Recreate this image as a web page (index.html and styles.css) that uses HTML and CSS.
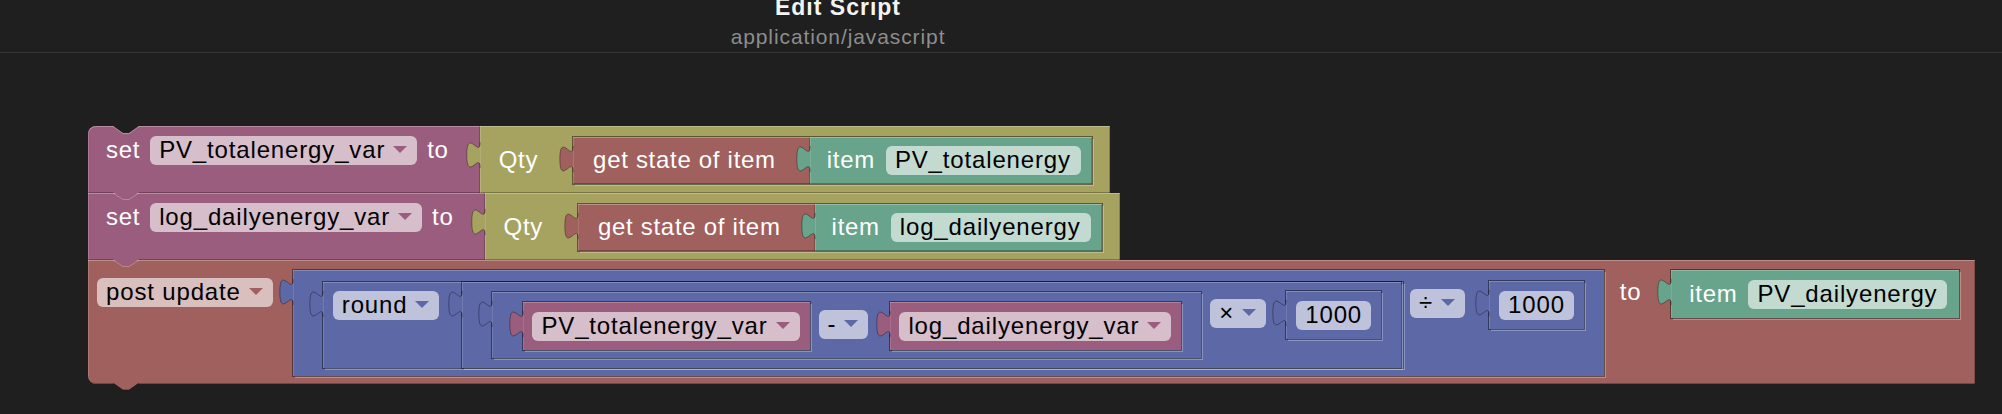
FILE: index.html
```html
<!DOCTYPE html>
<html>

<head>
  <meta charset="utf-8">
  <title>Edit Script</title>
  <link rel="stylesheet" href="styles.css">
</head>

<body>
  <!-- shared puzzle tab for value blocks -->
  <svg class="defs" aria-hidden="true">
    <symbol id="tab" viewBox="-8.5 -0.5 9 16" preserveAspectRatio="none">
      <path d="M0 0c0 10-8-8.5-8 7.5s8-2.5 8 7.5z" fill="currentColor" />
      <path d="M0 0c0 10-8-8.5-8 7.5s8-2.5 8 7.5" fill="none" stroke="#000" stroke-opacity=".35" stroke-width="1"
        vector-effect="non-scaling-stroke" />
    </symbol>
  </svg>

  <header class="topbar">
    <h1>Edit Script</h1>
    <div class="mime">application/javascript</div>
  </header>

  <main class="workspace">
    <div class="stack">

      <div class="row">
        <div class="blk stmt set first">
          <svg class="notch" viewBox="0 0 26 8"><polygon points="0,0 10,7 16,7 26,0" /><polyline points="0,0.5 10,7.5 16,7.5 26,0.5" /></svg>
          <span class="lbl">set</span>
          <span class="fld">PV_totalenergy_var<i class="arr"></i></span>
          <span class="lbl">to</span>
          <svg class="next" viewBox="0 0 26 8"><polygon points="0,0 10,7 16,7 26,0" /><polyline points="0,1 10,7.5 16,7.5 26,1" /></svg>
        </div>
        <div class="blk qty">
          <svg class="tab"><use href="#tab" /></svg>
          <span class="lbl">Qty</span>
          <div class="plug pair">
            <div class="blk get"><svg class="tab"><use href="#tab" /></svg><span class="lbl">get state of item</span></div>
            <div class="blk item"><svg class="tab"><use href="#tab" /></svg><span class="lbl">item</span><span class="fld">PV_totalenergy</span></div>
          </div>
        </div>
      </div>

      <div class="row">
        <div class="blk stmt set">
          <span class="lbl">set</span>
          <span class="fld">log_dailyenergy_var<i class="arr"></i></span>
          <span class="lbl">to</span>
          <svg class="next" viewBox="0 0 26 8"><polygon points="0,0 10,7 16,7 26,0" /><polyline points="0,1 10,7.5 16,7.5 26,1" /></svg>
        </div>
        <div class="blk qty">
          <svg class="tab"><use href="#tab" /></svg>
          <span class="lbl">Qty</span>
          <div class="plug pair">
            <div class="blk get"><svg class="tab"><use href="#tab" /></svg><span class="lbl">get state of item</span></div>
            <div class="blk item"><svg class="tab"><use href="#tab" /></svg><span class="lbl">item</span><span class="fld">log_dailyenergy</span></div>
          </div>
        </div>
      </div>

      <div class="blk stmt post">
        <span class="fld">post update<i class="arr"></i></span>

        <div class="blk math plug div">
          <svg class="tab"><use href="#tab" /></svg>
          <div class="blk math plug round">
            <svg class="tab"><use href="#tab" /></svg>
            <span class="fld">round<i class="arr"></i></span>
            <div class="blk math plug mul">
              <svg class="tab"><use href="#tab" /></svg>
              <div class="blk math plug sub">
                <svg class="tab"><use href="#tab" /></svg>
                <div class="blk var plug"><svg class="tab"><use href="#tab" /></svg><span class="fld">PV_totalenergy_var<i class="arr"></i></span></div>
                <span class="fld">-<i class="arr"></i></span>
                <div class="blk var plug"><svg class="tab"><use href="#tab" /></svg><span class="fld">log_dailyenergy_var<i class="arr"></i></span></div>
              </div>
              <span class="fld">×<i class="arr"></i></span>
              <div class="blk math plug num"><svg class="tab"><use href="#tab" /></svg><span class="fld">1000</span></div>
            </div>
          </div>
          <span class="fld">÷<i class="arr"></i></span>
          <div class="blk math plug num"><svg class="tab"><use href="#tab" /></svg><span class="fld">1000</span></div>
        </div>

        <span class="lbl">to</span>
        <div class="blk item plug"><svg class="tab"><use href="#tab" /></svg><span class="lbl">item</span><span class="fld">PV_dailyenergy</span></div>

        <svg class="next" viewBox="0 0 26 8"><polygon points="0,0 10,7 16,7 26,0" /><polyline points="0,0 10,7 16,7 26,0" /></svg>
      </div>

    </div>
  </main>
</body>

</html>
```

FILE: styles.css
```css
* {
  box-sizing: border-box;
}

body {
  margin: 0;
  height: 414px;
  overflow: hidden;
  background-color: #1f1f1f;
  font-family: "Liberation Sans", Arial, Helvetica, sans-serif;
}

.defs {
  position: absolute;
  width: 0;
  height: 0;
  overflow: hidden;
}

/* header */

.topbar {
  height: 53px;
  padding-right: 326px;
  border-bottom: 1px solid #353535;
  display: flex;
  flex-direction: column;
  align-items: center;
}

.topbar h1 {
  margin: -5px 0 0;
  font-size: 23px;
  line-height: 24px;
  font-weight: bold;
  letter-spacing: 1px;
  color: #f4f4f4;
}

.mime {
  margin-top: 6px;
  font-size: 21px;
  line-height: 24px;
  letter-spacing: 0.9px;
  color: #8d8d8d;
}

/* workspace */

.workspace {
  padding: 73px 0 0 88px;
}

.stack {
  display: flex;
  flex-direction: column;
  align-items: flex-start;
}

.row {
  display: flex;
  align-items: stretch;
}

/* block colours */

.set,
.var {
  --c: #9b5d7e;
}

.qty {
  --c: #a6a360;
}

.get,
.post {
  --c: #a0605d;
}

.item {
  --c: #68a48b;
}

.math {
  --c: #5d69a6;
}

/* blocks */

.blk {
  position: relative;
  display: flex;
  align-items: flex-start;
  background-color: var(--c);
  box-shadow: inset 0 1px 0 rgba(255, 255, 255, 0.28), inset 1px 0 0 rgba(255, 255, 255, 0.16),
    inset 0 -1px 0 rgba(0, 0, 0, 0.28), inset -1px 0 0 rgba(0, 0, 0, 0.2);
}

.plug {
  box-shadow: 0 0 0 1px rgba(0, 0, 0, 0.45), 2px 2px 0 0 rgba(255, 255, 255, 0.28),
    inset 0 1px 0 rgba(255, 255, 255, 0.22), inset 1px 0 0 rgba(255, 255, 255, 0.14);
}

.pair {
  display: flex;
}

.lbl {
  height: 29px;
  padding-bottom: 2px;
  font-size: 24px;
  line-height: 27px;
  letter-spacing: 0.7px;
  white-space: nowrap;
  color: #fff;
}

.fld {
  display: inline-flex;
  align-items: center;
  height: 29px;
  padding: 0 10px 2px 9px;
  border-radius: 6px;
  background-color: rgba(255, 255, 255, 0.6);
  font-size: 24px;
  line-height: 27px;
  letter-spacing: 0.85px;
  white-space: nowrap;
  color: #000;
}

.arr {
  margin-left: 8px;
  border-left: 7.5px solid transparent;
  border-right: 7.5px solid transparent;
  border-top: 7px solid var(--c);
}

.tab {
  position: absolute;
  left: -14px;
  top: 8px;
  width: 15px;
  height: 28px;
  color: var(--c);
  overflow: visible;
}

/* statement notches */

.notch,
.next {
  position: absolute;
  left: 25px;
  width: 26px;
  height: 8px;
  overflow: visible;
}

.notch {
  top: 0;
}

.notch polygon {
  fill: #1f1f1f;
}

.notch polyline {
  fill: none;
  stroke: rgba(255, 255, 255, 0.3);
}

.next {
  top: calc(100% - 1px);
  z-index: 1;
  color: var(--c);
}

.next polygon {
  fill: currentColor;
}

.next polyline {
  fill: none;
  stroke: rgba(255, 255, 255, 0.25);
}

.post .next polyline {
  stroke: rgba(0, 0, 0, 0.4);
}

/* set ... to */

.set {
  padding: 10px 31px 0 18px;
  gap: 10px;
}

.first {
  border-top-left-radius: 8px;
}

.qty {
  padding: 11px 18px 9px 19px;
  align-items: center;
  gap: 35px;
}

.qty > .tab {
  top: 15px;
}

.get {
  padding: 9px 34px 9px 20px;
  align-items: center;
}

.item {
  padding: 9px 11px 9px 17px;
  align-items: center;
  gap: 11px;
}

/* post update */

.post {
  padding: 10px 16px 8px 9px;
  border-bottom-left-radius: 8px;
}

.post > .fld {
  margin: 8px 20px 0 0;
}

.post > .lbl {
  margin: 8px 30px 0 16px;
}

.post > .item {
  padding: 10px 12px 9px 18px;
}

/* math blocks */

.div {
  padding: 0 20px 8px 30px;
}

.div > .round {
  margin-top: 12px;
}

.div > .fld {
  margin: 19px 24px 0 7px;
}

.div > .num {
  margin-top: 11px;
}

.round {
  padding: 0 2px 0 10px;
}

.round > .fld {
  margin: 9px 23px 0 0;
}

.mul {
  align-self: stretch;
  padding: 0 20px 10px 30px;
}

.mul > .sub {
  margin-top: 10px;
}

.mul > .fld {
  margin: 17px 20px 0 9px;
}

.mul > .num {
  margin-top: 9px;
}

.sub {
  padding: 0 20px 8px 31px;
}

.sub > .var {
  margin-top: 10px;
}

.sub > .fld {
  margin: 18px 22px 0 9px;
}

.var {
  padding: 10px 10px 9px 9px;
}

.num {
  padding: 10px 10px 9px;
}

.num .fld {
  padding: 0 9px 2px;
}
```
